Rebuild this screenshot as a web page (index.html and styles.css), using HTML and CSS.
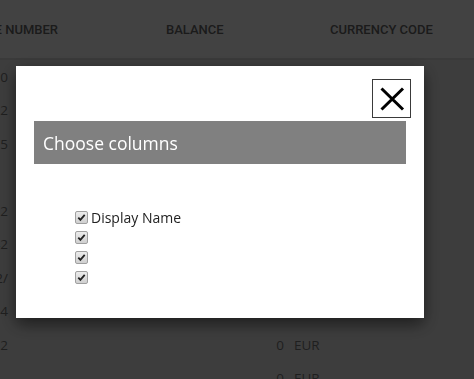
FILE: index.html
```html
<!DOCTYPE html>
<html lang="en">
<head>
<meta charset="utf-8">
<title>Accounts</title>
<link rel="stylesheet" href="styles.css">
</head>
<body>
<div class="table">
  <div class="thead">
    <div class="th th-number"><span>PHONE NUMBER</span></div>
    <div class="th th-balance">BALANCE</div>
    <div class="th th-currency">CURRENCY CODE</div>
  </div>
  <div class="tbody">
    <div class="tr"><div class="td td-first"><span>1020</span></div><div class="td td-balance">0</div><div class="td td-currency">EUR</div></div>
    <div class="tr"><div class="td td-first"><span>1022</span></div><div class="td td-balance">0</div><div class="td td-currency">EUR</div></div>
    <div class="tr"><div class="td td-first"><span>1025</span></div><div class="td td-balance">0</div><div class="td td-currency">EUR</div></div>
    <div class="tr"><div class="td td-first"><span></span></div><div class="td td-balance">0</div><div class="td td-currency">EUR</div></div>
    <div class="tr"><div class="td td-first"><span>1032</span></div><div class="td td-balance">0</div><div class="td td-currency">EUR</div></div>
    <div class="tr"><div class="td td-first"><span>1042</span></div><div class="td td-balance">0</div><div class="td td-currency">EUR</div></div>
    <div class="tr"><div class="td td-first"><span>12/</span></div><div class="td td-balance">0</div><div class="td td-currency">EUR</div></div>
    <div class="tr"><div class="td td-first"><span>1054</span></div><div class="td td-balance">0</div><div class="td td-currency">EUR</div></div>
    <div class="tr"><div class="td td-first"><span>1062</span></div><div class="td td-balance">0</div><div class="td td-currency">EUR</div></div>
    <div class="tr"><div class="td td-first"><span></span></div><div class="td td-balance">0</div><div class="td td-currency">EUR</div></div>
  </div>
</div>

<div class="overlay">
  <div class="modal">
    <div class="modal-top">
      <button class="close" aria-label="Close">
        <svg width="37" height="37" viewBox="0 0 37 37"><path d="M8.5 8.5 L30 29.5 M30 8.5 L8.5 29.5" stroke="#000" stroke-width="3" fill="none"/></svg>
      </button>
    </div>
    <div class="modal-title">Choose columns</div>
    <ul class="col-list">
      <li class="col-item"><span class="cb" role="checkbox" aria-checked="true"><svg width="11" height="11" viewBox="0 0 11 11"><path d="M2.3 5.6 L4.4 7.8 L8.7 2.9" stroke="#222" stroke-width="1.8" fill="none"/></svg></span><span class="col-label">Display Name</span></li>
      <li class="col-item"><span class="cb" role="checkbox" aria-checked="true"><svg width="11" height="11" viewBox="0 0 11 11"><path d="M2.3 5.6 L4.4 7.8 L8.7 2.9" stroke="#222" stroke-width="1.8" fill="none"/></svg></span></li>
      <li class="col-item"><span class="cb" role="checkbox" aria-checked="true"><svg width="11" height="11" viewBox="0 0 11 11"><path d="M2.3 5.6 L4.4 7.8 L8.7 2.9" stroke="#222" stroke-width="1.8" fill="none"/></svg></span></li>
      <li class="col-item"><span class="cb" role="checkbox" aria-checked="true"><svg width="11" height="11" viewBox="0 0 11 11"><path d="M2.3 5.6 L4.4 7.8 L8.7 2.9" stroke="#222" stroke-width="1.8" fill="none"/></svg></span></li>
    </ul>
  </div>
</div>
</body>
</html>
```

FILE: styles.css
```css
html, body {
  margin: 0;
  padding: 0;
  height: 100%;
  overflow: hidden;
}

body {
  background: #ececec;
  font-family: "Open Sans", "Noto Sans", sans-serif;
}

.table {
  width: 100%;
}

.thead {
  display: grid;
  grid-template-columns: 58px 272px 1fr;
  align-items: center;
  height: 58px;
  background: #ffffff;
  border-bottom: 2px solid #dedede;
  font-family: Roboto, "Noto Sans", sans-serif;
  font-weight: 500;
  font-size: 13px;
  color: #6a6a6a;
}

.th {
  white-space: nowrap;
}

.th-number {
  display: flex;
  justify-content: flex-end;
}

.th-balance {
  padding-left: 108px;
}

.tbody {
  background: #ececec;
}

.tr {
  display: grid;
  grid-template-columns: 8px 276px 1fr;
  align-items: center;
  height: 33.5px;
  font-size: 13.5px;
  color: #7a7a7a;
}

.td {
  white-space: nowrap;
}

.td-first {
  display: flex;
  justify-content: flex-end;
}

.td-balance {
  text-align: right;
}

.td-currency {
  padding-left: 10px;
}

.overlay {
  position: fixed;
  inset: 0;
  background: rgba(0, 0, 0, 0.74);
  padding: 66px 0 0 16px;
}

.modal {
  width: 408px;
  box-sizing: border-box;
  background: #ffffff;
  padding: 13px 18px 31px 18px;
  box-shadow: 0 6px 16px rgba(0, 0, 0, 0.55);
}

.modal-top {
  display: flex;
  justify-content: flex-end;
  margin-right: -5px;
}

.close {
  width: 39px;
  height: 39px;
  box-sizing: border-box;
  border: 1px solid #3a3a3a;
  background: #ffffff;
  padding: 0;
  margin: 0;
  display: flex;
  align-items: center;
  justify-content: center;
  cursor: pointer;
}

.modal-title {
  margin-top: 3px;
  height: 43px;
  background: #808080;
  color: #ffffff;
  font-size: 17.5px;
  display: flex;
  align-items: center;
  padding-left: 9px;
}

.col-list {
  list-style: none;
  margin: 43px 0 0 0;
  padding: 0 0 0 41px;
}

.col-item {
  height: 20px;
  display: flex;
  align-items: center;
  gap: 3px;
}

.cb {
  width: 11px;
  height: 11px;
  border: 1px solid #a0a0a0;
  border-radius: 2px;
  background: linear-gradient(#ececec, #cfcfcf);
  display: flex;
}

.col-label {
  font-size: 14px;
  color: #222222;
}
```
